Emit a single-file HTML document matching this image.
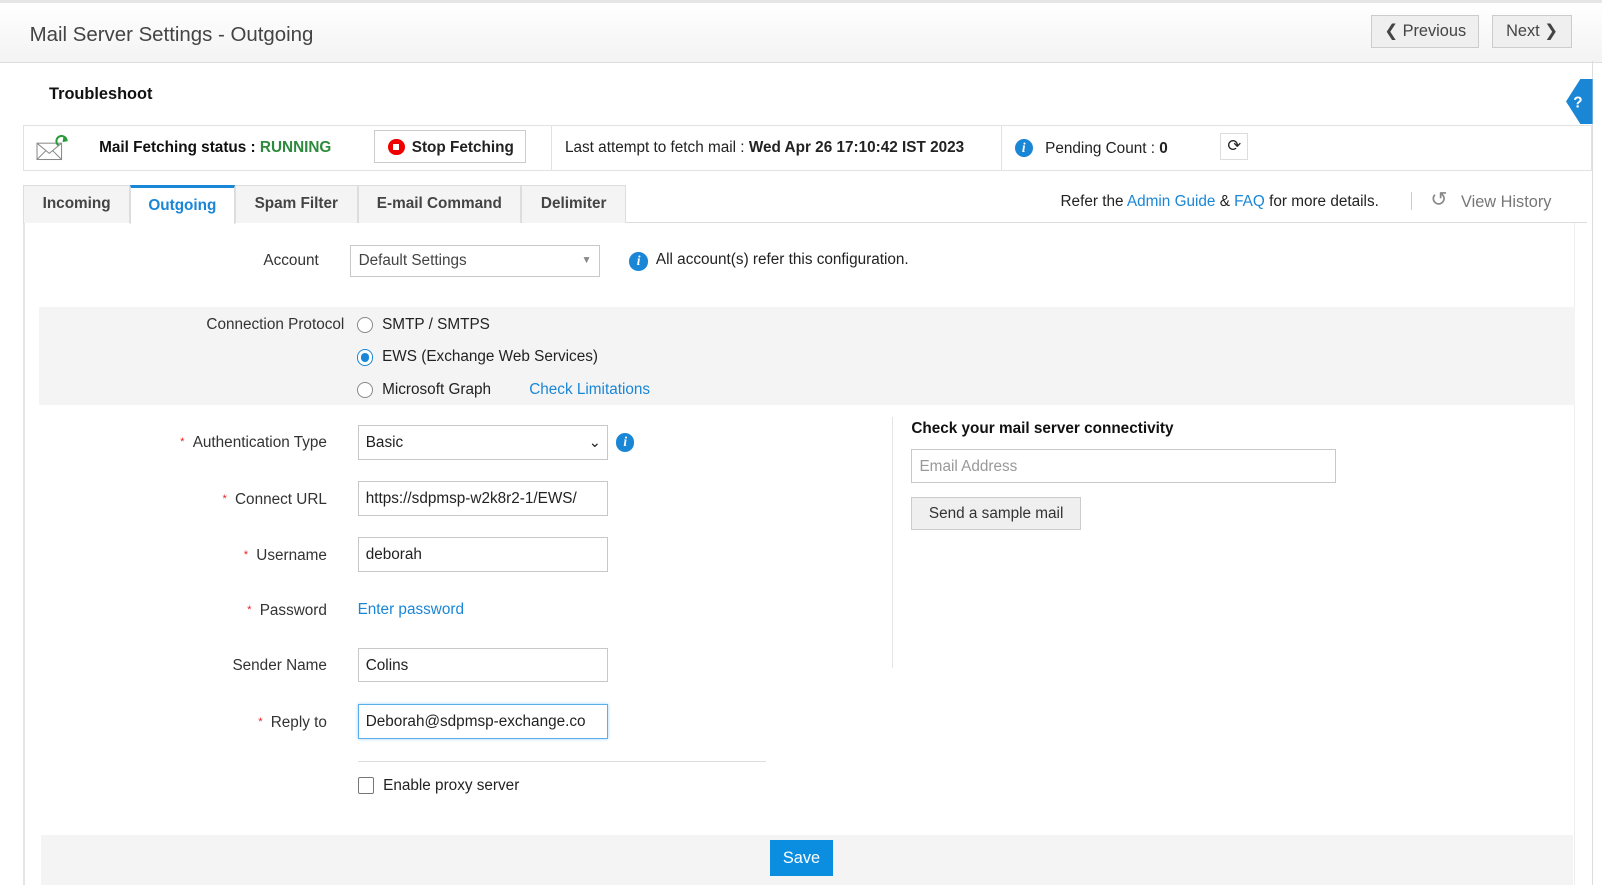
<!DOCTYPE html>
<html><head><meta charset="utf-8"><style>
html,body{margin:0;padding:0;width:1602px;height:885px;overflow:hidden;background:#fff}
#w{zoom:1.02168;position:relative;width:1568px;height:866px;font-family:"Liberation Sans",sans-serif;color:#222;font-size:15px}
.a{position:absolute;white-space:nowrap;line-height:20px}
.lbl{position:absolute;text-align:right;width:200px;color:#333;font-size:15px;line-height:20px}
.req{color:#e22;font-size:11px;margin-right:8px;vertical-align:2px}
.inp{position:absolute;border:1px solid #c8c8c8;background:#fff;box-sizing:border-box;padding-left:7px;font-size:15px;color:#222;line-height:34px;height:34px;overflow:hidden}
.link{color:#1a86d6}
.tab{position:absolute;top:181px;height:37px;box-sizing:border-box;background:#f4f4f4;border:1px solid #ddd;border-bottom:none;font-weight:bold;font-size:15px;color:#444;text-align:center;line-height:36px}
.radio{position:absolute;width:14px;height:14px;border:1px solid #888;border-radius:50%;background:#fff}
.info{position:absolute;width:18px;height:18px;border-radius:50%;background:#1a86d6;color:#fff;font:italic bold 13px "Liberation Serif",serif;text-align:center;line-height:18px}
</style></head><body><div id="w">
<div class="a" style="left:0;top:0;width:1568px;height:62px;background:linear-gradient(#fff,#f3f3f3);border-top:3px solid #e6e6e6;border-bottom:1px solid #ddd;box-sizing:border-box"></div>
<div class="a" style="left:29px;top:23px;font-size:20px;line-height:24px;color:#444">Mail Server Settings - Outgoing</div>
<div class="a" style="left:1342px;top:15px;width:106px;height:32px;border:1px solid #ccc;background:#efefef;box-sizing:border-box;line-height:31px;text-align:center;color:#444;font-size:16px">&#10094; Previous</div>
<div class="a" style="left:1460px;top:15px;width:79px;height:32px;border:1px solid #ccc;background:#efefef;box-sizing:border-box;line-height:31px;text-align:center;color:#444;font-size:16px">Next &#10095;</div>
<div class="a" style="left:1558px;top:60px;width:1px;height:806px;background:#ddd"></div>
<div class="a" style="left:1531px;top:77px;width:40px;height:44px;"><svg width="40" height="44"><path d="M16 0 L2 22 L16 44 L28 44 L28 0Z" fill="#1a86d6"/><text x="9" y="28" fill="#fff" font-family="Liberation Sans" font-weight="bold" font-size="15">?</text></svg></div>
<div class="a" style="left:48px;top:82px;font-weight:bold;font-size:16px;color:#111">Troubleshoot</div>
<div class="a" style="left:23px;top:122px;width:1535px;height:45px;border:1px solid #e2e2e2;box-sizing:border-box"></div>
<svg class="a" style="left:35px;top:132px" width="34" height="26"><rect x="1" y="8" width="24" height="16" fill="#fff" stroke="#888"/><path d="M1 8 L13 18 L25 8 M1 24 L10 15 M25 24 L16 15" fill="none" stroke="#888"/><path d="M22 10 A5 5 0 1 1 30 6" fill="none" stroke="#2a9b3a" stroke-width="2"/><path d="M27 1 L31 6 L26 7Z" fill="#2a9b3a"/></svg>
<div class="a" style="left:97px;top:135px;font-weight:bold;font-size:15px;color:#111">Mail Fetching status : <span style="color:#2e8b3e">RUNNING</span></div>
<div class="a" style="left:366px;top:127px;width:149px;height:33px;border:1px solid #ccc;box-sizing:border-box"></div>
<div class="a" style="left:380px;top:136px;width:16px;height:16px;border-radius:50%;background:#e00"><div style="position:absolute;left:5px;top:5px;width:6px;height:6px;background:#fff"></div></div>
<div class="a" style="left:403px;top:135px;font-weight:bold;font-size:15px;color:#222">Stop Fetching</div>
<div class="a" style="left:539px;top:123px;width:1px;height:43px;background:#e2e2e2"></div>
<div class="a" style="left:553px;top:135px;font-size:15px;color:#222">Last attempt to fetch mail : <b>Wed Apr 26 17:10:42 IST 2023</b></div>
<div class="a" style="left:980px;top:123px;width:1px;height:43px;background:#e2e2e2"></div>
<div class="info" style="left:993px;top:136px">i</div>
<div class="a" style="left:1023px;top:136px;font-size:15px;color:#222">Pending Count : <b>0</b></div>
<div class="a" style="left:1194px;top:130px;width:28px;height:27px;border:1px solid #ddd;box-sizing:border-box;text-align:center;line-height:25px;font-size:16px">&#10227;</div>
<div class="a" style="left:23px;top:217px;width:1530px;height:1px;background:#ddd"></div>
<div class="tab" style="left:23px;width:104px">Incoming</div>
<div class="tab" style="left:127px;width:103px;background:#fff;border-top:3px solid #1a86d6;color:#1a86d6;height:38px;line-height:36px">Outgoing</div>
<div class="tab" style="left:230px;width:120px">Spam Filter</div>
<div class="tab" style="left:350px;width:160px">E-mail Command</div>
<div class="tab" style="left:510px;width:103px">Delimiter</div>
<div class="a" style="left:1038px;top:188px;font-size:15px">Refer the <span class="link">Admin Guide</span> &amp; <span class="link">FAQ</span> for more details.</div>
<div class="a" style="left:1381px;top:188px;width:1px;height:18px;background:#ccc"></div>
<div class="a" style="left:1400px;top:186px;font-size:20px;color:#888">&#8634;</div>
<div class="a" style="left:1430px;top:188px;font-size:16px;color:#777">View History</div>
<div class="a" style="left:23px;top:218px;width:1px;height:648px;background:#e4e4e4"></div>
<div class="a" style="left:1541px;top:218px;width:1px;height:648px;background:#eee"></div>

<div class="lbl" style="left:112px;top:246px">Account</div>
<div class="inp" style="left:343px;top:240px;width:244px;height:31px;line-height:30px;color:#444">Default Settings<span style="position:absolute;right:7px;top:0;color:#888;font-size:10px">&#9660;</span></div>
<div class="info" style="left:616px;top:247px">i</div>
<div class="a" style="left:642px;top:245px">All account(s) refer this configuration.</div>

<div class="a" style="left:38px;top:300px;width:1504px;height:96px;background:#f4f4f4"></div>
<div class="lbl" style="left:137px;top:308px">Connection Protocol</div>
<div class="radio" style="left:349px;top:310px"></div><div class="a" style="left:374px;top:308px">SMTP / SMTPS</div>
<div class="radio" style="left:349px;top:342px;border-color:#1a86d6"><div style="position:absolute;left:3px;top:3px;width:8px;height:8px;border-radius:50%;background:#1a86d6"></div></div><div class="a" style="left:374px;top:340px">EWS (Exchange Web Services)</div>
<div class="radio" style="left:349px;top:374px"></div><div class="a" style="left:374px;top:372px">Microsoft Graph</div>
<div class="a link" style="left:518px;top:372px">Check Limitations</div>

<div class="lbl" style="left:120px;top:423px"><span class="req">*</span>Authentication Type</div>
<div class="inp" style="left:350px;top:416px;width:245px">Basic<span style="position:absolute;right:6px;top:0;font-size:14px">&#8964;</span></div>
<div class="info" style="left:603px;top:424px">i</div>
<div class="lbl" style="left:120px;top:479px"><span class="req">*</span>Connect URL</div>
<div class="inp" style="left:350px;top:471px;width:245px">https://sdpmsp-w2k8r2-1/EWS/</div>
<div class="lbl" style="left:120px;top:533px"><span class="req">*</span>Username</div>
<div class="inp" style="left:350px;top:526px;width:245px">deborah</div>
<div class="lbl" style="left:120px;top:587px"><span class="req">*</span>Password</div>
<div class="a link" style="left:350px;top:587px">Enter password</div>
<div class="lbl" style="left:120px;top:642px">Sender Name</div>
<div class="inp" style="left:350px;top:634px;width:245px">Colins</div>
<div class="lbl" style="left:120px;top:697px"><span class="req">*</span>Reply to</div>
<div class="inp" style="left:350px;top:689px;width:245px;border-color:#5aaeea;box-shadow:0 0 3px #9cd0f5">Deborah@sdpmsp-exchange.co</div>
<div class="a" style="left:350px;top:745px;width:400px;height:1px;background:#ddd"></div>
<div class="a" style="left:350px;top:761px;width:14px;height:14px;border:1px solid #777;border-radius:2px"></div>
<div class="a" style="left:375px;top:760px">Enable proxy server</div>

<div class="a" style="left:873px;top:408px;width:1px;height:246px;background:#e4e4e4"></div>
<div class="a" style="left:892px;top:410px;font-weight:bold;font-size:15px;color:#111">Check your mail server connectivity</div>
<div class="inp" style="left:892px;top:439px;width:416px;color:#999">Email Address</div>
<div class="a" style="left:892px;top:486px;width:166px;height:33px;border:1px solid #ccc;background:#efefef;box-sizing:border-box;line-height:32px;text-align:center;color:#333">Send a sample mail</div>

<div class="a" style="left:40px;top:817px;width:1500px;height:49px;background:#f4f4f4"></div>
<div class="a" style="left:754px;top:822px;width:61px;height:35px;background:#0b8ee0;color:#fff;text-align:center;line-height:36px;font-size:16px">Save</div>
</div></body></html>
